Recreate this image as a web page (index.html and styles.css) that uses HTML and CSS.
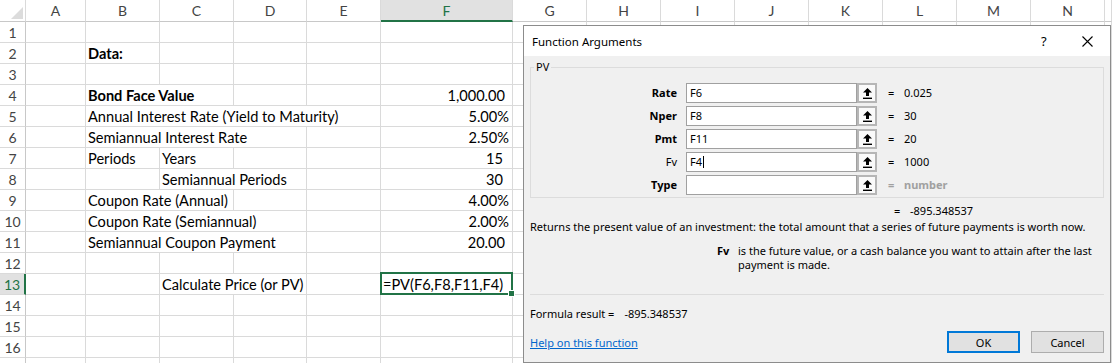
FILE: index.html
```html
<!DOCTYPE html>
<html>
<head>
<meta charset="utf-8">
<link rel="stylesheet" href="styles.css">
</head>
<body>
<div class="sheet">
  <div class="ch corner"><svg width="26" height="22" viewBox="0 0 26 22"><polygon points="23,7 23,19 11,19" fill="#dcdcdc"/></svg></div>
  <div class="ch">A</div><div class="ch">B</div><div class="ch">C</div><div class="ch">D</div><div class="ch">E</div><div class="ch sel">F</div><div class="ch">G</div><div class="ch">H</div><div class="ch">I</div><div class="ch">J</div><div class="ch">K</div><div class="ch">L</div><div class="ch">M</div><div class="ch">N</div><div class="ch"></div>

  <div class="rh">1</div><div></div><div></div><div></div><div></div><div></div><div></div><div></div><div></div><div></div><div></div><div></div><div></div><div></div><div></div><div></div>
  <div class="rh">2</div><div></div><div class="b">Data:</div><div></div><div></div><div></div><div></div><div></div><div></div><div></div><div></div><div></div><div></div><div></div><div></div><div></div>
  <div class="rh">3</div><div></div><div></div><div></div><div></div><div></div><div></div><div></div><div></div><div></div><div></div><div></div><div></div><div></div><div></div><div></div>
  <div class="rh">4</div><div></div><div class="b s2">Bond Face Value</div><div></div><div></div><div class="num">1,000.00</div><div></div><div></div><div></div><div></div><div></div><div></div><div></div><div></div><div></div>
  <div class="rh">5</div><div></div><div class="s4">Annual Interest Rate (Yield to Maturity)</div><div class="pct">5.00%</div><div></div><div></div><div></div><div></div><div></div><div></div><div></div><div></div><div></div>
  <div class="rh">6</div><div></div><div class="s3">Semiannual Interest Rate</div><div></div><div class="pct">2.50%</div><div></div><div></div><div></div><div></div><div></div><div></div><div></div><div></div><div></div>
  <div class="rh">7</div><div></div><div>Periods</div><div>Years</div><div></div><div></div><div class="int">15</div><div></div><div></div><div></div><div></div><div></div><div></div><div></div><div></div><div></div>
  <div class="rh">8</div><div></div><div></div><div class="s2">Semiannual Periods</div><div></div><div class="int">30</div><div></div><div></div><div></div><div></div><div></div><div></div><div></div><div></div><div></div>
  <div class="rh">9</div><div></div><div class="s2">Coupon Rate (Annual)</div><div></div><div></div><div class="pct">4.00%</div><div></div><div></div><div></div><div></div><div></div><div></div><div></div><div></div><div></div>
  <div class="rh">10</div><div></div><div class="s3">Coupon Rate (Semiannual)</div><div></div><div class="pct">2.00%</div><div></div><div></div><div></div><div></div><div></div><div></div><div></div><div></div><div></div>
  <div class="rh">11</div><div></div><div class="s3">Semiannual Coupon Payment</div><div></div><div class="num">20.00</div><div></div><div></div><div></div><div></div><div></div><div></div><div></div><div></div><div></div>
  <div class="rh">12</div><div></div><div></div><div></div><div></div><div></div><div></div><div></div><div></div><div></div><div></div><div></div><div></div><div></div><div></div><div></div>
  <div class="rh sel">13</div><div></div><div></div><div class="s2">Calculate Price (or PV)</div><div></div><div class="active">=PV(F6,F8,F11,F4)</div><div></div><div></div><div></div><div></div><div></div><div></div><div></div><div></div><div></div>
  <div class="rh">14</div><div></div><div></div><div></div><div></div><div></div><div></div><div></div><div></div><div></div><div></div><div></div><div></div><div></div><div></div><div></div>
  <div class="rh">15</div><div></div><div></div><div></div><div></div><div></div><div></div><div></div><div></div><div></div><div></div><div></div><div></div><div></div><div></div><div></div>
  <div class="rh">16</div><div></div><div></div><div></div><div></div><div></div><div></div><div></div><div></div><div></div><div></div><div></div><div></div><div></div><div></div><div></div>
  <div class="rh"></div><div></div><div></div><div></div><div></div><div></div><div></div><div></div><div></div><div></div><div></div><div></div><div></div><div></div><div></div><div></div>
</div>

<div class="dialog">
  <div class="titlebar">
    <span class="title">Function Arguments</span>
    <span class="help">?</span>
    <span class="close"><svg width="11" height="11" viewBox="0 0 11 11"><path d="M0.5 0.5 L10.5 10.5 M10.5 0.5 L0.5 10.5" stroke="#000" stroke-width="1.1" fill="none"/></svg></span>
  </div>
  <div class="body">
    <fieldset class="group">
      <legend>PV</legend>
      <div class="args">
        <div class="lbl b">Rate</div><div class="field">F6</div><div class="pick"><svg width="9" height="11" viewBox="0 0 9 11"><path d="M4.5 0 L9 4.5 H6 V8 H3 V4.5 H0 Z" fill="#000"/><rect x="0" y="9.6" width="9" height="1.4" fill="#000"/></svg></div><div class="res"><span class="eq">=</span>0.025</div>
        <div class="lbl b">Nper</div><div class="field">F8</div><div class="pick"><svg width="9" height="11" viewBox="0 0 9 11"><path d="M4.5 0 L9 4.5 H6 V8 H3 V4.5 H0 Z" fill="#000"/><rect x="0" y="9.6" width="9" height="1.4" fill="#000"/></svg></div><div class="res"><span class="eq">=</span>30</div>
        <div class="lbl b">Pmt</div><div class="field">F11</div><div class="pick"><svg width="9" height="11" viewBox="0 0 9 11"><path d="M4.5 0 L9 4.5 H6 V8 H3 V4.5 H0 Z" fill="#000"/><rect x="0" y="9.6" width="9" height="1.4" fill="#000"/></svg></div><div class="res"><span class="eq">=</span>20</div>
        <div class="lbl">Fv</div><div class="field">F4<span class="caret"></span></div><div class="pick"><svg width="9" height="11" viewBox="0 0 9 11"><path d="M4.5 0 L9 4.5 H6 V8 H3 V4.5 H0 Z" fill="#000"/><rect x="0" y="9.6" width="9" height="1.4" fill="#000"/></svg></div><div class="res"><span class="eq">=</span>1000</div>
        <div class="lbl b">Type</div><div class="field"></div><div class="pick"><svg width="9" height="11" viewBox="0 0 9 11"><path d="M4.5 0 L9 4.5 H6 V8 H3 V4.5 H0 Z" fill="#000"/><rect x="0" y="9.6" width="9" height="1.4" fill="#000"/></svg></div><div class="res muted"><span class="eq">=</span>number</div>
      </div>
    </fieldset>
    <div class="total"><span class="eq">=</span>-895.348537</div>
    <p class="desc">Returns the present value of an investment: the total amount that a series of future payments is worth now.</p>
    <div class="arghelp"><span class="argname">Fv</span><span class="argtext">is the future value, or a cash balance you want to attain after the last payment is made.</span></div>
    <div class="sep"></div>
    <div class="fres">Formula result =<span class="fval">-895.348537</span></div>
    <div class="foot">
      <a class="link" href="#">Help on this function</a>
      <div class="btns"><button class="btn ok">OK</button><button class="btn">Cancel</button></div>
    </div>
  </div>
</div>
</body>
</html>
```

FILE: styles.css
```css
html, body {
  margin: 0;
  padding: 0;
  background: #fff;
}

body {
  width: 1112px;
  height: 363px;
  overflow: hidden;
  position: relative;
}

.sheet {
  display: grid;
  grid-template-columns: 26px 60px 74px 74px 73px 74px 132px repeat(8, 74px) 1fr;
  grid-template-rows: 22px;
  grid-auto-rows: 21px;
  font-family: Lato, "Liberation Sans", sans-serif;
  font-size: 14.6px;
  color: #000;
  height: 363px;
  overflow: hidden;
}

.sheet > div {
  box-sizing: border-box;
  border-right: 1px solid #dadada;
  border-bottom: 1px solid #dadada;
  white-space: nowrap;
  padding: 0 2px;
  line-height: 21px;
  overflow: visible;
}

.sheet > .ch {
  text-align: center;
  color: #444;
  background: #fff;
  border-bottom-color: #c8c8c8;
  line-height: 22px;
  padding: 0;
  font-size: 14px;
}

.sheet > .corner {
  padding: 0;
  line-height: 0;
}

.sheet > .ch.sel {
  background: #e1e1e1;
  color: #217346;
  border-bottom: 2px solid #217346;
}

.sheet > .rh {
  text-align: center;
  color: #444;
  padding: 0;
  border-right-color: #c8c8c8;
  font-size: 14px;
}

.sheet > .rh.sel {
  background: #e1e1e1;
  color: #217346;
  border-right: 2px solid #217346;
}

.sheet .b { font-weight: bold; }
.sheet .s2 { grid-column: span 2; }
.sheet .s3 { grid-column: span 3; }
.sheet .s4 { grid-column: span 4; }

.sheet > .num { text-align: right; padding-right: 7px; }
.sheet > .pct { text-align: right; padding-right: 3px; }
.sheet > .int { text-align: right; padding-right: 9px; }

.sheet > .active {
  position: relative;
}

.sheet > .active::after {
  content: "";
  position: absolute;
  left: -1px;
  top: -2px;
  right: -1px;
  bottom: -1px;
  border: 2px solid #217346;
  z-index: 2;
}

.sheet > .active::before {
  content: "";
  position: absolute;
  right: -3px;
  bottom: -3px;
  width: 5px;
  height: 5px;
  background: #217346;
  border: 1px solid #fff;
  z-index: 3;
}

/* Dialog */
.dialog {
  position: absolute;
  left: 523px;
  top: 25px;
  width: 588px;
  height: 338px;
  box-sizing: border-box;
  border: 1px solid #8c8c8c;
  background: #f0f0f0;
  font-family: "Noto Sans", "Liberation Sans", sans-serif;
  font-size: 11px;
  color: #000;
  z-index: 10;
  display: flex;
  flex-direction: column;
}

.titlebar {
  height: 30px;
  background: #fff;
  display: flex;
  align-items: center;
  padding-left: 8px;
  font-size: 11.5px;
}

.title { flex: 1; }

.help {
  font-size: 13px;
  width: 20px;
  margin-right: 21px;
}

.close {
  width: 11px;
  margin-right: 17px;
  line-height: 0;
}

.body {
  flex: 1;
  padding: 0 6px;
  display: flex;
  flex-direction: column;
}

.group {
  margin: 4px 0 0;
  padding: 9px 0 2px;
  border: 1px solid #dcdcdc;
  min-width: 0;
}

.group legend {
  margin-left: 3px;
  padding: 0 2px;
  line-height: 14px;
}

.args {
  display: grid;
  grid-template-columns: 155px 171px 20px 1fr;
  grid-auto-rows: 20px;
  row-gap: 3px;
}

.lbl {
  text-align: right;
  padding-right: 9px;
  line-height: 20px;
}

.b { font-weight: bold; }

.field {
  box-sizing: border-box;
  background: #fff;
  border: 1px solid #a0a0a0;
  padding-left: 3px;
  line-height: 18px;
  display: flex;
  align-items: center;
}

.caret {
  display: inline-block;
  width: 1px;
  height: 12px;
  background: #000;
  margin-left: 1px;
}

.pick {
  box-sizing: border-box;
  border: 2px solid #b6b6b6;
  background: #fafafa;
  display: flex;
  align-items: center;
  justify-content: center;
}

.res {
  padding-left: 11px;
  line-height: 20px;
}

.eq {
  display: inline-block;
  width: 16px;
}

.muted { color: #a0a0a0; font-weight: bold; }

.total {
  margin-top: 6px;
  padding-left: 364px;
  line-height: 14px;
}

.desc {
  margin: 2px 0 0;
  line-height: 14px;
}

.arghelp {
  margin-top: 10px;
  display: flex;
  line-height: 14px;
}

.argname {
  font-weight: bold;
  width: 21px;
  margin-left: 187px;
  flex: none;
}

.argtext {
  width: 370px;
}

.sep {
  margin-top: 22px;
  height: 1px;
  background: #dcdcdc;
}

.fres {
  margin-top: 12px;
  line-height: 14px;
}

.fval { margin-left: 10px; }

.foot {
  margin-top: 10px;
  display: flex;
  align-items: center;
  justify-content: space-between;
}

.link {
  color: #0066cc;
  text-decoration: underline;
}

.btns {
  display: flex;
  gap: 11px;
}

.btn {
  box-sizing: border-box;
  width: 73px;
  height: 22px;
  background: #e1e1e1;
  border: 1px solid #adadad;
  font-family: "Noto Sans", "Liberation Sans", sans-serif;
  font-size: 11px;
  color: #000;
  padding: 0;
}

.btn.ok {
  border: 2px solid #0078d7;
}
```
